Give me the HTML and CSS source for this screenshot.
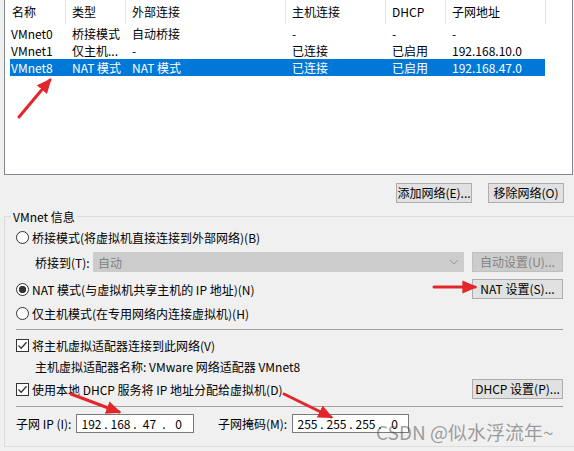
FILE: index.html
```html
<!DOCTYPE html>
<html>
<head>
	<meta charset="utf-8">
	<link rel="stylesheet" href="styles.css">
</head>
<body>
	<div class="list">
		<div class="head">
			<div class="hc first">名称</div>
			<div class="hc">类型</div>
			<div class="hc">外部连接</div>
			<div class="hc">主机连接</div>
			<div class="hc">DHCP</div>
			<div class="hc">子网地址</div>
		</div>
		<div class="row">
			<span>VMnet0</span><span>桥接模式</span><span>自动桥接</span><span>-</span><span>-</span><span>-</span>
		</div>
		<div class="row">
			<span>VMnet1</span><span>仅主机...</span><span>-</span><span>已连接</span><span>已启用</span><span>192.168.10.0</span>
		</div>
		<div class="row selected">
			<span>VMnet8</span><span>NAT 模式</span><span>NAT 模式</span><span>已连接</span><span>已启用</span><span>192.168.47.0</span>
		</div>
	</div>

	<div class="btns">
		<div class="btn w76">添加网络(E)...</div>
		<div class="btn w76">移除网络(O)</div>
	</div>

	<div class="group">
		<div class="legend">VMnet 信息</div>
		<div class="inner">
			<div class="line r1">
				<span class="radio"></span>桥接模式(将虚拟机直接连接到外部网络)(B)
			</div>
			<div class="line r2 indent">
				<span class="lbl">桥接到(T):</span>
				<div class="select">
					<span>自动</span>
					<svg width="10" height="6" viewBox="0 0 10 6"><path d="M1 1 L5 5 L9 1" fill="none" stroke="#9a9a9a" stroke-width="1"/></svg>
				</div>
				<div class="btn off w91">自动设置(U)...</div>
			</div>
			<div class="line r3">
				<span class="radio on"></span>NAT 模式(与虚拟机共享主机的 IP 地址)(N)
				<div class="btn w91 right">NAT 设置(S)...</div>
			</div>
			<div class="line r4">
				<span class="radio"></span>仅主机模式(在专用网络内连接虚拟机)(H)
			</div>
			<div class="sep s1"></div>
			<div class="line r5">
				<span class="check"><svg width="11" height="11" viewBox="0 0 11 11"><path d="M1.5 5.5 L4.2 8.2 L9.5 2.2" fill="none" stroke="#333" stroke-width="1.3"/></svg></span>将主机虚拟适配器连接到此网络(V)
			</div>
			<div class="line r6 indent">主机虚拟适配器名称: VMware 网络适配器 VMnet8</div>
			<div class="line r7">
				<span class="check"><svg width="11" height="11" viewBox="0 0 11 11"><path d="M1.5 5.5 L4.2 8.2 L9.5 2.2" fill="none" stroke="#333" stroke-width="1.3"/></svg></span>使用本地 DHCP 服务将 IP 地址分配给虚拟机(D)
				<div class="btn w91 right">DHCP 设置(P)...</div>
			</div>
			<div class="sep s2"></div>
			<div class="line r8">
				<span class="lbl ip">子网 IP (I):</span>
				<div class="ipbox w118">
					<span class="oct">192</span><span class="dot">.</span><span class="oct">168</span><span class="dot">.</span><span class="oct">47</span><span class="dot">.</span><span class="oct">0</span>
				</div>
				<span class="lbl mask">子网掩码(M):</span>
				<div class="ipbox w117">
					<span class="oct">255</span><span class="dot">.</span><span class="oct">255</span><span class="dot">.</span><span class="oct">255</span><span class="dot">.</span><span class="oct">0</span>
				</div>
			</div>
		</div>
	</div>

	<div class="watermark">CSDN @似水浮流年~</div>

	<svg class="arrows" width="574" height="451" viewBox="0 0 574 451">
		<defs>
			<marker id="head" markerWidth="5" markerHeight="4.4" refX="4.2" refY="2.2" orient="auto">
				<path d="M0 0 L5 2.2 L0 4.4 Z" fill="#e3262b"/>
			</marker>
		</defs>
		<line x1="19" y1="117" x2="50" y2="80" stroke="#e3262b" stroke-width="3" stroke-linecap="round" marker-end="url(#head)"/>
		<line x1="434" y1="287" x2="475" y2="287" stroke="#e3262b" stroke-width="3" stroke-linecap="round" marker-end="url(#head)"/>
		<line x1="71" y1="394" x2="119" y2="412" stroke="#e3262b" stroke-width="3" stroke-linecap="round" marker-end="url(#head)"/>
		<line x1="284" y1="394" x2="331" y2="417" stroke="#e3262b" stroke-width="3" stroke-linecap="round" marker-end="url(#head)"/>
	</svg>
</body>
</html>
```

FILE: styles.css
```css
* {
	box-sizing: border-box;
}

body {
	margin: 0;
	width: 574px;
	height: 451px;
	overflow: hidden;
	position: relative;
	background: #f0f0f0;
	font-family: "Noto Sans CJK SC", "Noto Sans", sans-serif;
	font-size: 12px;
	color: #000;
}

/* network list */
.list {
	margin: -1px 0 0 4px;
	width: 569px;
	height: 176px;
	background: #fff;
	border: 1px solid #828790;
}

.head {
	display: grid;
	grid-template-columns: 61px 60px 160px 100px 60px 100px;
	height: 25px;
}

.hc {
	height: 24px;
	line-height: 24px;
	padding-left: 6px;
	border-right: 1px solid #e5e5e5;
	white-space: nowrap;
}

.hc.first {
	padding-left: 7px;
}

.row {
	display: grid;
	grid-template-columns: 55px 60px 160px 100px 60px 100px;
	margin-left: 5px;
	width: 535px;
	height: 17px;
	line-height: 17px;
}

.row span {
	padding-left: 7px;
	white-space: nowrap;
}

.row span:first-child {
	padding-left: 1px;
}

.row.selected {
	background: #0078d7;
	color: #fff;
}

/* buttons */
.btns {
	display: flex;
	justify-content: flex-end;
	gap: 16px;
	margin: 8px 10px 0 0;
}

.btn {
	height: 20px;
	line-height: 18px;
	background: #e1e1e1;
	border: 1px solid #adadad;
	text-align: center;
	white-space: nowrap;
}

.btn.off {
	background: #cccccc;
	border-color: #bfbfbf;
	color: #838383;
}

.w76 { width: 76px; }
.w91 { width: 91px; }

.right {
	margin-left: auto;
}

/* group box */
.group {
	margin: 13px -3px 0 4px;
	height: 231px;
	border: 1px solid #dcdcdc;
}

.legend {
	width: fit-content;
	margin: -8px 0 0 6px;
	padding: 0 2px;
	height: 16px;
	line-height: 16px;
	background: #f0f0f0;
}

.inner {
	margin-left: 11px;
	width: 547px;
}

.line {
	display: flex;
	align-items: center;
	height: 18px;
	white-space: nowrap;
}

.indent {
	padding-left: 19px;
}

.r1 { margin-top: 3px; }
.r2 { margin-top: 6px; height: 20px; }
.r3 { margin-top: 7px; height: 20px; }
.r4 { margin-top: 5px; }
.r5 { margin-top: 6px; }
.r6 { margin-top: 3px; }
.r7 { margin-top: 4px; height: 20px; }
.r8 { margin-top: 7px; height: 19px; }

.radio {
	width: 13px;
	height: 13px;
	border-radius: 50%;
	border: 1px solid #333;
	background: #fff;
	margin-right: 3px;
	flex: none;
}

.radio.on {
	background: radial-gradient(circle, #333 0 3.4px, #fff 4px);
}

.check {
	display: flex;
	align-items: center;
	justify-content: center;
	width: 13px;
	height: 13px;
	border: 1px solid #333;
	background: #fff;
	margin-right: 3px;
	flex: none;
}

.lbl {
	width: 58px;
}

.select {
	display: flex;
	align-items: center;
	justify-content: space-between;
	width: 371px;
	height: 20px;
	margin-right: 8px;
	padding: 0 4px 0 4px;
	background: #cccccc;
	border: 1px solid #cccccc;
	color: #838383;
}

.sep {
	border-top: 1px solid #a0a0a0;
}

.s1 { margin-top: 7px; }
.s2 { margin-top: 7px; }

.lbl.ip {
	width: 60px;
}

.lbl.mask {
	width: 74px;
	margin-left: 24px;
}

.ipbox {
	display: flex;
	height: 19px;
	line-height: 17px;
	padding-left: 3px;
	background: #fff;
	border: 1px solid #7a7a7a;
}

.w118 { width: 118px; }
.w117 { width: 117px; }

.oct {
	width: 23px;
	text-align: center;
}

.dot {
	width: 6px;
	text-align: center;
}

.watermark {
	position: absolute;
	left: 376px;
	top: 420px;
	font-size: 19px;
	line-height: 24px;
	color: rgba(70, 70, 70, 0.5);
	white-space: nowrap;
}

.arrows {
	position: absolute;
	left: 0;
	top: 0;
	pointer-events: none;
}
```
